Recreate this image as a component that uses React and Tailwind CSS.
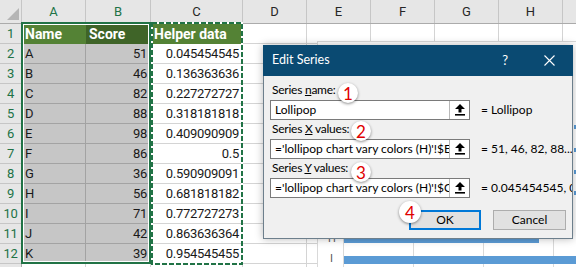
import React from 'react';

const names = ['A', 'B', 'C', 'D', 'E', 'F', 'G', 'H', 'I', 'J', 'K'];
const scores = [51, 46, 82, 88, 98, 86, 36, 56, 71, 42, 39];
const helper = [
  '0.045454545', '0.136363636', '0.227272727', '0.318181818', '0.409090909', '0.5',
  '0.590909091', '0.681818182', '0.772727273', '0.863636364', '0.954545455',
];
const rest = ['D', 'E', 'F', 'G', 'H', 'I'];

function HeaderRow() {
  return (
    <div className="flex h-[24px] bg-[#e6e6e6] border-b border-[#ababab] text-[13px]">
      <div className="relative w-[22px] shrink-0 border-r border-[#c6c6c6]">
        <svg className="absolute left-0 top-0" width="22" height="23">
          <polygon points="19,8 19,20 7,20" fill="#b5b5b5" />
        </svg>
      </div>
      <div className="w-[64px] shrink-0 border-r border-[#c6c6c6] flex items-center justify-center text-[#217346]">A</div>
      <div className="w-[65px] shrink-0 border-r border-[#c6c6c6] flex items-center justify-center text-[#217346]">B</div>
      <div className="w-[92px] shrink-0 border-r border-[#c6c6c6] flex items-center justify-center text-[#262626]">C</div>
      {rest.map((c) => (
        <div key={c} className="w-[64px] shrink-0 border-r border-[#c6c6c6] flex items-center justify-center text-[#262626]">
          {c === 'I' ? '' : c}
        </div>
      ))}
    </div>
  );
}

function Row({ r }) {
  const i = r - 2;
  const rowHead = (
    <div className="w-[22px] shrink-0 bg-[#e6e6e6] border-r border-b border-r-[#ababab] border-b-[#c6c6c6] flex items-center justify-center text-[#217346]">
      {r <= 12 ? r : ''}
    </div>
  );
  let a, b, c;
  if (r === 1) {
    a = <div className="w-[64px] shrink-0 bg-[#548235] text-white font-bold text-[14px] tracking-normal flex items-center pl-[3px]">Name</div>;
    b = <div className="w-[65px] shrink-0 bg-[#3f6428] text-white font-bold text-[14px] tracking-normal flex items-center pl-[3px]">Score</div>;
    c = <div className="w-[92px] shrink-0 bg-[#548235] text-white font-bold text-[14px] tracking-normal flex items-center pl-[3px]">Helper data</div>;
  } else if (r <= 12) {
    a = <div className="w-[64px] shrink-0 bg-[#c6c6c6] border-r border-b border-[#a3a3a3] flex items-center pl-[3px] text-[#1a1a1a]">{names[i]}</div>;
    b = <div className="w-[65px] shrink-0 bg-[#c6c6c6] border-r border-b border-[#a3a3a3] flex items-center justify-end pr-[3px] text-[#1a1a1a]">{scores[i]}</div>;
    c = <div className="w-[92px] shrink-0 bg-white border-r border-b border-[#d4d4d4] flex items-center justify-end pr-[3px] text-[#1a1a1a]">{helper[i]}</div>;
  } else {
    a = <div className="w-[64px] shrink-0 bg-white border-r border-b border-[#d4d4d4]" />;
    b = <div className="w-[65px] shrink-0 bg-white border-r border-b border-[#d4d4d4]" />;
    c = <div className="w-[92px] shrink-0 bg-white border-r border-b border-[#d4d4d4]" />;
  }
  return (
    <div className="flex h-[20px] text-[13px] tracking-[-0.3px]">
      {rowHead}
      {a}
      {b}
      {c}
      {rest.map((k) => (
        <div key={k} className="w-[64px] shrink-0 bg-white border-r border-b border-[#d4d4d4]" />
      ))}
    </div>
  );
}

function UploadIcon() {
  return (
    <svg width="10" height="12" viewBox="0 0 10 12">
      <path d="M5 0 L10 5 H6.5 V8.5 H3.5 V5 H0 Z" fill="#000" />
      <rect x="0" y="10" width="10" height="1.6" fill="#000" />
    </svg>
  );
}

function InputRow({ value, result }) {
  return (
    <div className="mt-[3px] mr-[-6px] flex h-[20px] items-center">
      <div className="flex h-[20px] w-[200px] shrink-0 border border-[#7a7a7a] bg-white">
        <div className="min-w-0 flex-1 overflow-hidden whitespace-nowrap pl-[4px] leading-[18px]">{value}</div>
        <div className="flex w-[20px] shrink-0 items-center justify-center border-l border-[#b9b9b9] bg-white">
          <UploadIcon />
        </div>
      </div>
      <div className="ml-[11px] min-w-0 flex-1 overflow-hidden whitespace-nowrap">{result}</div>
    </div>
  );
}

function Badge({ n, className }) {
  return (
    <div
      className={`absolute flex items-center justify-center rounded-full bg-white text-[#e00000] text-[17px] leading-none font-['Lato',sans-serif] shadow-[0_1px_3px_rgba(0,0,0,0.45)] ${className}`}
    >
      {n}
    </div>
  );
}

export default function App() {
  const rows = [];
  for (let r = 1; r <= 13; r++) rows.push(<Row key={r} r={r} />);
  return (
    <div className="relative h-[267px] w-[576px] overflow-hidden bg-white font-['Roboto',sans-serif]">
      <div className="flex flex-col">
        <HeaderRow />
        {rows}
      </div>

      {/* selection border A1:B12 */}
      <div className="absolute left-[21px] top-[22px] h-[242px] w-[130px] border-2 border-[#217346] shadow-[inset_0_0_0_1px_#ffffff]" />

      {/* marching ants C1:C12 */}
      <svg className="absolute left-[151px] top-[22px]" width="92" height="243">
        <rect x="1" y="1" width="90" height="241" fill="none" stroke="#ffffff" strokeWidth="2" />
        <rect x="1" y="1" width="90" height="241" fill="none" stroke="#217346" strokeWidth="2" strokeDasharray="5 2" />
      </svg>

      {/* chart object behind dialog */}
      <svg className="absolute left-[317px] top-[41px]" width="259" height="226">
        <rect x="0" y="0" width="259" height="226" fill="#ffffff" />
        <line x1="0.5" y1="0" x2="0.5" y2="226" stroke="#d9d9d9" />
        <line x1="0" y1="0.5" x2="259" y2="0.5" stroke="#d9d9d9" />
        <line x1="26.5" y1="30" x2="26.5" y2="226" stroke="#d9d9d9" />
        <line x1="96.5" y1="30" x2="96.5" y2="226" stroke="#d9d9d9" />
        <line x1="166.5" y1="30" x2="166.5" y2="226" stroke="#d9d9d9" />
        <line x1="236.5" y1="30" x2="236.5" y2="226" stroke="#d9d9d9" />
        <rect x="257" y="84" width="4" height="4" fill="#5b9bd5" />
        <rect x="257" y="107" width="4" height="4" fill="#5b9bd5" />
        <rect x="257" y="129" width="4" height="4" fill="#5b9bd5" />
        <rect x="257" y="150" width="4" height="4" fill="#5b9bd5" />
        <rect x="27" y="195" width="195" height="7" fill="#5b9bd5" />
        <rect x="27" y="215" width="240" height="8" fill="#5b9bd5" />
        <text x="11" y="201" fontSize="11" fill="#595959" fontFamily="Roboto, sans-serif">H</text>
        <text x="13" y="221" fontSize="11" fill="#595959" fontFamily="Roboto, sans-serif">I</text>
      </svg>

      {/* Edit Series dialog */}
      <div className="absolute left-[263px] top-[45px] w-[310px] shadow-[0_0_8px_rgba(0,0,0,0.28)] font-['Lato',sans-serif] text-[12px] text-black">
        <div className="flex h-[31px] items-center bg-[#0a4a72] pl-[9px] pr-[18px] text-[12.5px] text-white">
          <span>Edit Series</span>
          <span className="ml-auto text-[13px]">?</span>
          <svg className="ml-[36px]" width="11" height="11" viewBox="0 0 11 11">
            <path d="M0.5 0.5 L10.5 10.5 M10.5 0.5 L0.5 10.5" stroke="#ffffff" strokeWidth="1.1" />
          </svg>
        </div>
        <div className="h-[163px] border-x border-b border-[#6d7f8c] bg-[#f0f0f0] px-[6px] pt-[7px]">
          <div className="h-[14px] pl-[2px] leading-[14px] tracking-[-0.25px]">
            Series <u>n</u>ame:
          </div>
          <InputRow value="Lollipop" result="= Lollipop" />
          <div className="mt-[2px] h-[14px] pl-[2px] leading-[14px] tracking-[-0.25px]">
            Series <u>X</u> values:
          </div>
          <InputRow value="='lollipop chart vary colors (H)'!$E$2:$E$12" result="= 51, 46, 82, 88..." />
          <div className="mt-[2px] h-[14px] pl-[2px] leading-[14px] tracking-[-0.25px]">
            Series <u>Y</u> values:
          </div>
          <InputRow value="='lollipop chart vary colors (H)'!$C$2:$C$12" result="= 0.045454545, 0..." />
          <div className="mt-[12px] flex justify-end gap-[12px]">
            <button className="flex h-[20px] w-[72px] items-center justify-center border-2 border-[#0078d7] bg-[#e1e1e1]">OK</button>
            <button className="flex h-[20px] w-[73px] items-center justify-center border border-[#adadad] bg-[#e1e1e1]">Cancel</button>
          </div>
        </div>
        <Badge n="1" className="left-[75px] top-[38px] h-[20px] w-[20px]" />
        <Badge n="2" className="left-[88px] top-[76px] h-[20px] w-[20px]" />
        <Badge n="3" className="left-[88px] top-[117px] h-[20px] w-[20px]" />
        <Badge n="4" className="left-[136px] top-[156px] h-[22px] w-[22px]" />
      </div>
    </div>
  );
}
